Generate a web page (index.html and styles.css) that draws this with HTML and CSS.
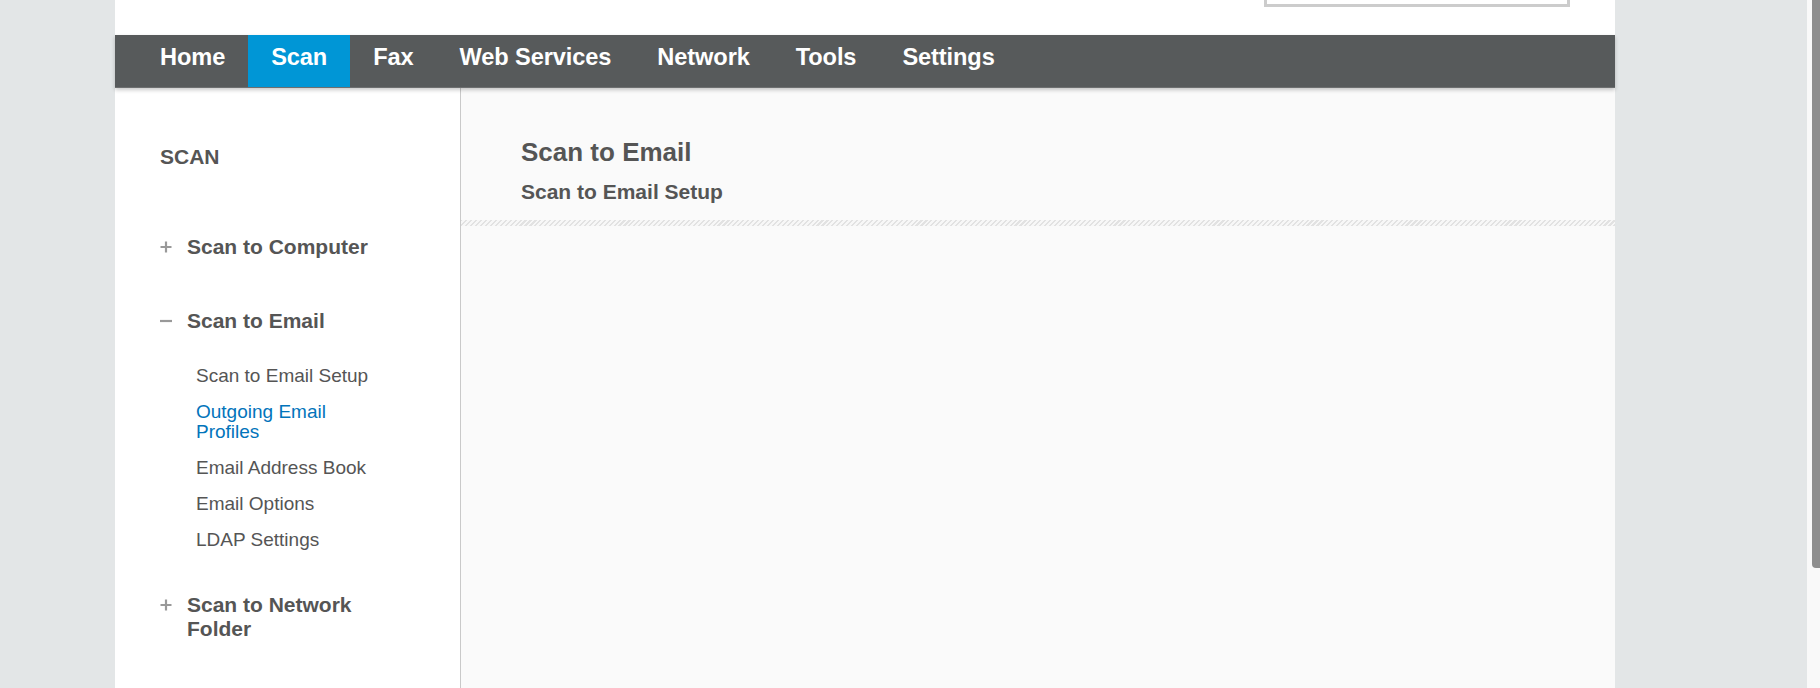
FILE: index.html
```html
<!DOCTYPE html>
<html lang="en">
<head>
<meta charset="utf-8">
<title>Scan to Email</title>
<link rel="stylesheet" href="styles.css">
</head>
<body>
<div class="viewport">
  <div class="page">
    <header class="top">
      <div class="search"></div>
    </header>
    <nav class="nav">
      <a class="nav-item">Home</a>
      <a class="nav-item active">Scan</a>
      <a class="nav-item">Fax</a>
      <a class="nav-item">Web Services</a>
      <a class="nav-item">Network</a>
      <a class="nav-item">Tools</a>
      <a class="nav-item">Settings</a>
    </nav>
    <div class="content">
      <aside class="side">
        <h2 class="side-title">SCAN</h2>
        <div class="cat">
          <div class="cat-head">
            <svg class="cat-icon" width="12" height="12" viewBox="0 0 12 12"><path d="M6 0.5v11M0.5 6h11" stroke="#999999" stroke-width="2.2" fill="none"/></svg>
            <span class="cat-label">Scan to Computer</span>
          </div>
        </div>
        <div class="cat open">
          <div class="cat-head">
            <svg class="cat-icon" width="12" height="12" viewBox="0 0 12 12"><path d="M0 6h12" stroke="#999999" stroke-width="2.2" fill="none"/></svg>
            <span class="cat-label">Scan to Email</span>
          </div>
          <ul class="sub">
            <li class="sub-item">Scan to Email Setup</li>
            <li class="sub-item current">Outgoing Email Profiles</li>
            <li class="sub-item">Email Address Book</li>
            <li class="sub-item">Email Options</li>
            <li class="sub-item">LDAP Settings</li>
          </ul>
        </div>
        <div class="cat after-open">
          <div class="cat-head">
            <svg class="cat-icon" width="12" height="12" viewBox="0 0 12 12"><path d="M6 0.5v11M0.5 6h11" stroke="#999999" stroke-width="2.2" fill="none"/></svg>
            <span class="cat-label">Scan to Network Folder</span>
          </div>
        </div>
      </aside>
      <main class="main">
        <div class="main-head">
          <h1 class="main-title">Scan to Email</h1>
          <h2 class="main-sub">Scan to Email Setup</h2>
        </div>
        <div class="hatch"></div>
      </main>
    </div>
  </div>
  <div class="gutter"></div>
  <div class="scrollbar"><div class="thumb"></div></div>
</div>
</body>
</html>
```
FILE: styles.css
```css
html, body {
  margin: 0;
  padding: 0;
  height: 688px;
  overflow: hidden;
  background: #e3e6e7;
  font-family: "Liberation Sans", Arial, sans-serif;
  color: #555555;
}

.viewport {
  display: flex;
  height: 688px;
}

.page {
  margin-left: 115px;
  width: 1500px;
  display: flex;
  flex-direction: column;
  background: #ffffff;
}

.gutter {
  flex: 1;
  background: #e3e6e7;
}

.scrollbar {
  width: 13px;
  background: #f9f9f9;
  display: flex;
  justify-content: flex-end;
}

.thumb {
  width: 8px;
  height: 568px;
  background: #8e8e8e;
  border-bottom-left-radius: 4px;
}

.top {
  height: 35px;
  display: flex;
  justify-content: flex-end;
  padding-right: 45px;
  background: #ffffff;
}

.search {
  width: 306px;
  height: 7px;
  box-sizing: border-box;
  border: 3px solid #cccccc;
  border-top: none;
  background: #ffffff;
}

.nav {
  height: 53px;
  display: flex;
  padding-left: 22px;
  background: #575a5b;
  box-shadow: 0 2px 4px rgba(0, 0, 0, 0.22);
  border-bottom: 1px solid #6d6f70;
  box-sizing: border-box;
  position: relative;
  z-index: 1;
}

.nav-item {
  display: block;
  padding: 0 23px 8px;
  line-height: 45px;
  font-size: 23.6px;
  font-weight: bold;
  letter-spacing: -0.1px;
  color: #ffffff;
  white-space: nowrap;
}

.nav-item.active {
  background: #0096d6;
}

.content {
  flex: 1;
  display: flex;
}

.side {
  width: 346px;
  box-sizing: border-box;
  padding: 57px 80px 0 45px;
  background: #ffffff;
  border-right: 1px solid #c9c9c9;
  display: flex;
  flex-direction: column;
}

.side-title {
  margin: 0 0 16px;
  font-size: 21px;
  line-height: 24px;
  font-weight: bold;
}

.cat {
  margin-top: 50px;
}

.cat.after-open {
  margin-top: 43px;
}

.cat-head {
  display: flex;
  align-items: flex-start;
  gap: 15px;
}

.cat-icon {
  flex: none;
  margin-top: 6px;
}

.cat-label {
  font-size: 21px;
  line-height: 24px;
  font-weight: bold;
}

.sub {
  list-style: none;
  margin: 33px 0 0;
  padding: 0 0 0 36px;
  display: flex;
  flex-direction: column;
  gap: 16px;
}

.sub-item {
  font-size: 19px;
  line-height: 20px;
  color: #555555;
}

.sub-item.current {
  color: #0274bb;
}

.main {
  flex: 1;
  background: #fafafa;
}

.main-head {
  padding: 49px 60px 16px;
}

.main-title {
  margin: 0 0 13px;
  font-size: 26px;
  line-height: 30px;
  font-weight: bold;
}

.main-sub {
  margin: 0;
  font-size: 21px;
  line-height: 24px;
  font-weight: bold;
}

.hatch {
  height: 6px;
  background: repeating-linear-gradient(-45deg, #e2e2e2 0 1.5px, #f7f7f7 1.5px 3.5px);
}
```
